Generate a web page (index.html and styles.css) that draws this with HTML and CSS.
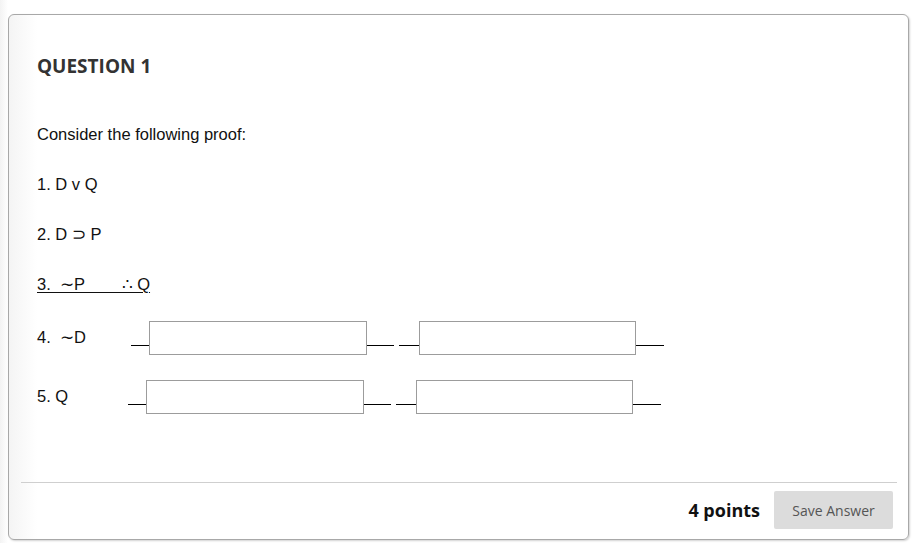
FILE: index.html
```html
<!DOCTYPE html>
<html>
<head>
<meta charset="utf-8">
<link rel="stylesheet" href="styles.css">
</head>
<body>
<div class="card">
  <div class="content">
    <h2 class="title">QUESTION 1</h2>
    <p class="line intro">Consider the following proof:</p>
    <p class="line l1">1. D v Q</p>
    <p class="line l2">2. D &#8835; P</p>
    <p class="line l3"><span class="ul">3.&nbsp; &#8764;P&nbsp;&nbsp;&nbsp;&nbsp;&nbsp;&nbsp;&nbsp; &#8756; Q</span></p>
    <div class="line row r4"><span class="lbl lbl4">4.&nbsp; &#8764;D</span><span class="seg s18"></span><input class="box" type="text"><span class="seg s26"></span><span class="gap"></span><span class="seg s20"></span><input class="box b2" type="text"><span class="seg s28"></span></div>
    <div class="line row r5"><span class="lbl lbl5">5. Q</span><span class="seg s18"></span><input class="box" type="text"><span class="seg s26"></span><span class="gap"></span><span class="seg s20"></span><input class="box b2" type="text"><span class="seg s28"></span></div>
  </div>
  <div class="divider"></div>
  <div class="footer">
    <span class="points">4 points</span>
    <button class="save" type="button">Save Answer</button>
  </div>
</div>
</body>
</html>
```
FILE: styles.css
```css
html, body {
  margin: 0;
  padding: 0;
  background: #fff;
}
body {
  width: 919px;
  height: 543px;
  overflow: hidden;
  background: linear-gradient(to right, #f3f3f3, #fff 8px);
}
.card {
  box-sizing: border-box;
  width: 901px;
  height: 526px;
  margin: 14px 0 0 8px;
  border: 1px solid #a8a8a8;
  border-radius: 6px;
  box-shadow: 1px 1px 2px rgba(0, 0, 0, 0.18);
  background: linear-gradient(to right, #f4f4f4, #fff 28px);
  display: flex;
  flex-direction: column;
}
.content {
  padding: 38px 0 0 28px;
  height: 430px;
  box-sizing: border-box;
}
.title {
  margin: 0;
  font-family: "Open Sans", sans-serif;
  font-weight: 700;
  font-size: 19px;
  line-height: 27px;
  color: #333;
}
.line {
  margin: 0;
  font-family: "Liberation Sans", Arial, sans-serif;
  font-size: 16.5px;
  line-height: 18px;
  color: #111;
}
.intro { margin-top: 45px; }
.l1 { margin-top: 32px; }
.l2 { margin-top: 32px; }
.l3 { margin-top: 32px; }
.ul {
  text-decoration: underline;
  text-underline-offset: 2px;
}
.r4 { margin-top: 28px; }
.r5 { margin-top: 25px; }
.lbl {
  display: inline-block;
}
.lbl4 { width: 94px; }
.lbl5 { width: 91px; }
.seg {
  display: inline-block;
  height: 0;
  border-bottom: 1px solid #000;
  vertical-align: -3px;
}
.s18 { width: 18px; }
.s26 { width: 27px; }
.s20 { width: 20px; }
.s28 { width: 28px; }
.gap {
  display: inline-block;
  width: 5px;
}
.box {
  box-sizing: border-box;
  width: 218px;
  height: 34px;
  margin: 0;
  padding: 0 2px;
  border: 1px solid #9c9c9c;
  border-radius: 0;
  background: #fff;
  font: 13.33px "Liberation Sans", Arial, sans-serif;
  vertical-align: baseline;
}
.b2 { width: 217px; }
.divider {
  height: 1px;
  background: #cfcfcf;
  margin: 0 11px 0 12px;
  margin-top: 37px;
}
.footer {
  display: flex;
  justify-content: flex-end;
  align-items: center;
  gap: 14px;
  padding: 8px 15px 0 0;
}
.points {
  font-family: "Open Sans", sans-serif;
  font-weight: 700;
  font-size: 18px;
  color: #111;
}
.save {
  box-sizing: border-box;
  width: 119px;
  height: 38px;
  border: none;
  border-radius: 2px;
  background: #dcdcdc;
  color: #555;
  font-family: "Open Sans", sans-serif;
  font-size: 14px;
  padding: 0;
}
```
